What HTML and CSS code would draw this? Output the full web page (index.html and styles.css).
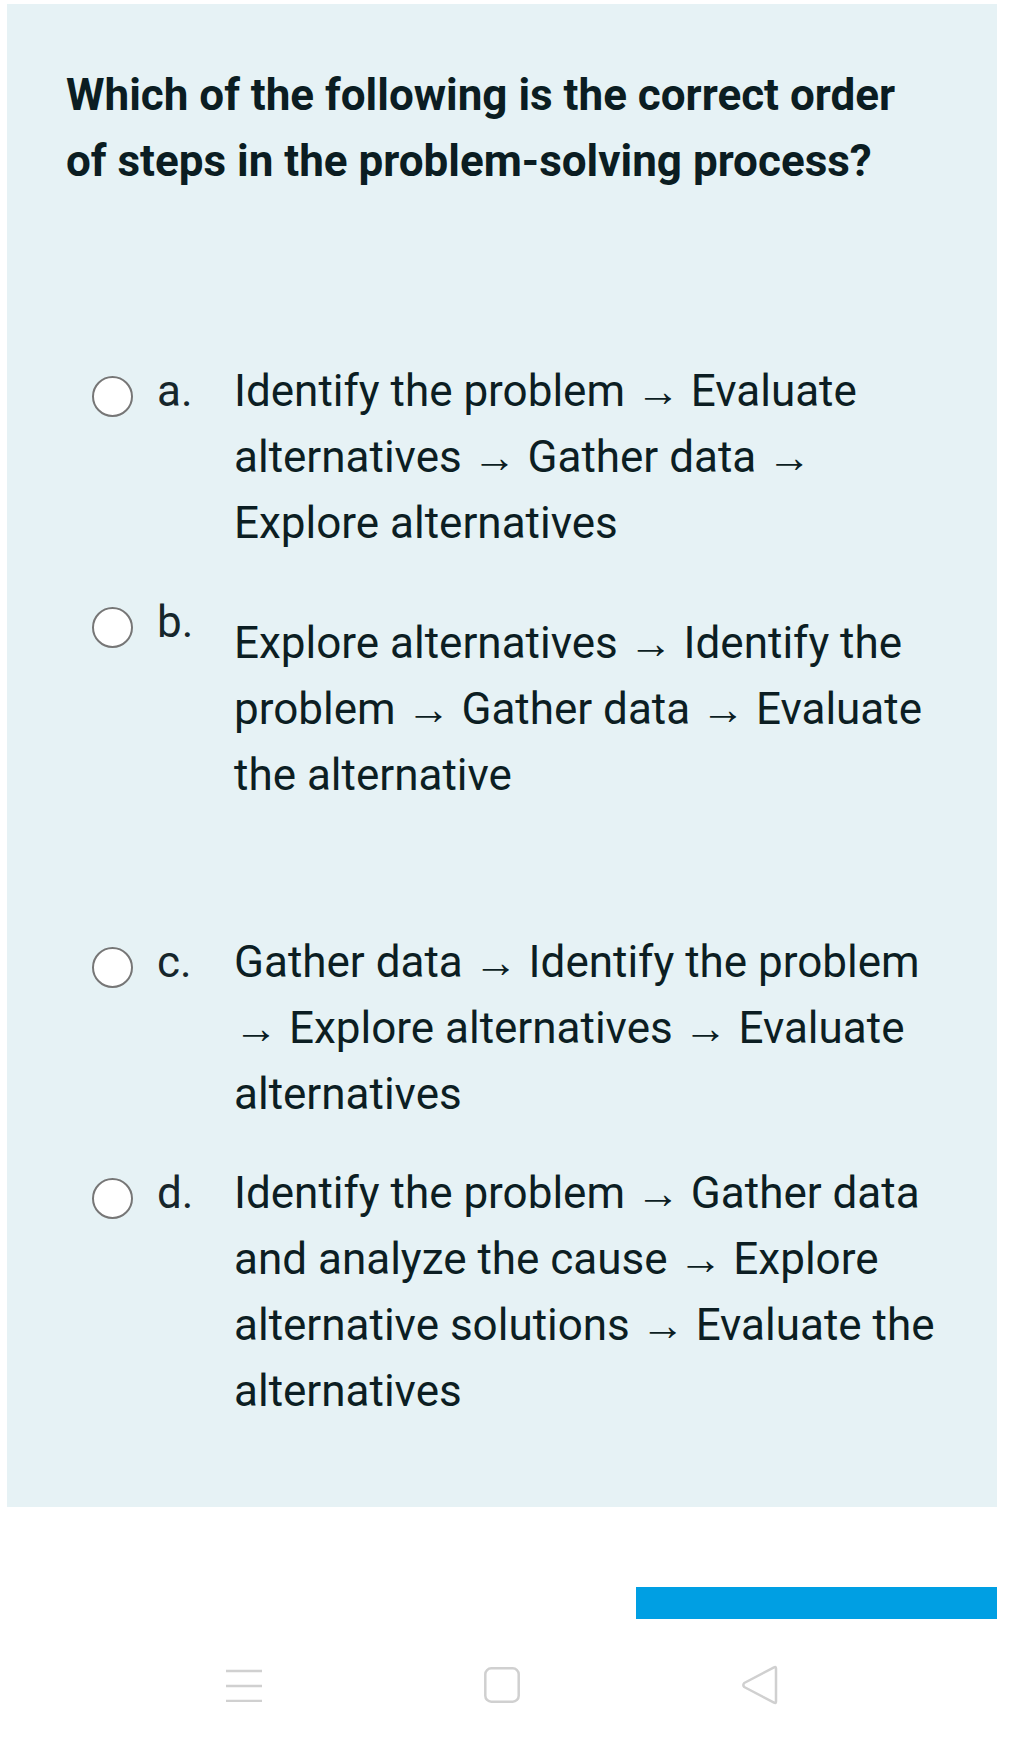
FILE: index.html
```html
<!DOCTYPE html>
<html lang="en">
<head>
<meta charset="utf-8">
<title>Quiz question</title>
<link rel="stylesheet" href="styles.css">
</head>
<body>
<main class="page">
  <section class="card">
    <h1 class="question">Which of the following is the correct order of steps in the problem-solving process?</h1>
    <div class="options">
      <div class="option">
        <span class="radio"></span>
        <span class="label">a.</span>
        <div class="text">Identify the problem → Evaluate alternatives → Gather data → Explore alternatives</div>
      </div>
      <div class="option option-b">
        <span class="radio"></span>
        <span class="label">b.</span>
        <div class="text">Explore alternatives → Identify the problem → Gather data → Evaluate the alternative</div>
      </div>
      <div class="option">
        <span class="radio"></span>
        <span class="label">c.</span>
        <div class="text">Gather data → Identify the problem → Explore alternatives → Evaluate alternatives</div>
      </div>
      <div class="option">
        <span class="radio"></span>
        <span class="label">d.</span>
        <div class="text">Identify the problem → Gather data and analyze the cause → Explore alternative solutions → Evaluate the alternatives</div>
      </div>
    </div>
  </section>
  <div class="action-bar"></div>
  <nav class="sysnav">
    <span class="nav-slot">
      <svg width="36" height="34" viewBox="0 0 36 34"><g stroke="#d0d0d0" stroke-width="2.4"><line x1="0" y1="3" x2="36" y2="3"/><line x1="0" y1="18" x2="36" y2="18"/><line x1="0" y1="33" x2="36" y2="33"/></g></svg>
    </span>
    <span class="nav-slot">
      <svg width="36" height="36" viewBox="0 0 36 36"><rect x="1.3" y="1.3" width="33.4" height="33.4" rx="6" fill="none" stroke="#d0d0d0" stroke-width="2.5"/></svg>
    </span>
    <span class="nav-slot">
      <svg width="38" height="40" viewBox="0 0 38 40"><path d="M35 3.5 Q35 1 33 2.4 L3.2 18 Q1.5 20 3.2 22 L33 37.6 Q35 39 35 36.5 Z" fill="none" stroke="#d0d0d0" stroke-width="2.5" stroke-linejoin="round"/></svg>
    </span>
  </nav>
</main>
</body>
</html>
```
FILE: styles.css
```css
* { box-sizing: border-box; }
html, body { margin: 0; padding: 0; background: #ffffff; }
body {
  font-family: Roboto, "Noto Sans", "Liberation Sans", sans-serif;
  color: #0c1e23;
}
.page { width: 1036px; }
.card {
  margin: 4px 39px 0 7px;
  padding: 58px 52px 83px 59px;
  background: #e6f2f5;
}
.question {
  margin: 0 0 164px;
  font-size: 44px;
  line-height: 66px;
  font-weight: 700;
  color: #0b1d22;
}
.options {
  display: flex;
  flex-direction: column;
  gap: 33px;
}
.option {
  display: flex;
  align-items: flex-start;
  padding-left: 26px;
  font-size: 44px;
  line-height: 66px;
}
.radio {
  flex: 0 0 41px;
  width: 41px;
  height: 41px;
  margin-top: 18px;
  border: 2.5px solid #767676;
  border-radius: 50%;
  background: #ffffff;
}
.label {
  flex: 0 0 77px;
  margin-left: 24px;
  color: #16262b;
}
.text {
  flex: 1;
  min-width: 0;
}
.option-b .text {
  margin-top: 21px;
  margin-bottom: 88px;
}
.action-bar {
  margin: 80px 0 0 636px;
  width: 361px;
  height: 32px;
  background: #009fe3;
}
.sysnav {
  display: grid;
  grid-template-columns: repeat(3, 258px);
  margin: 46px 0 0 115px;
  height: 40px;
}
.nav-slot {
  display: flex;
  align-items: center;
  justify-content: center;
}
```
